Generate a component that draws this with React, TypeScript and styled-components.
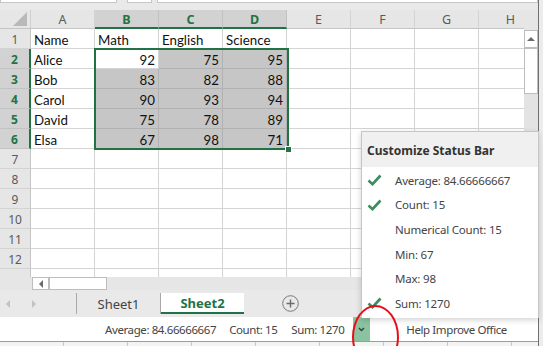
import React from 'react';
import styled, { createGlobalStyle, css } from 'styled-components';

const GREEN = '#217346';
const UI_FONT = `'Noto Sans', 'Open Sans', sans-serif`;
const CELL_FONT = `Lato, 'Noto Sans', sans-serif`;

const GlobalStyle = createGlobalStyle`
    html, body {
        margin: 0;
        padding: 0;
        overflow: hidden;
        background: #e9e9e9;
    }
`;

const Window = styled.div`
    position: relative;
    display: flex;
    width: 543px;
    height: 346px;
    overflow: hidden;
    background: #e9e9e9;
    font-family: ${UI_FONT};
`;

const Main = styled.div`
    display: flex;
    flex-direction: column;
    width: 538px;
    flex-shrink: 0;
`;

const WindowEdge = styled.div`
    flex: 1;
    border-left: 1px solid #6f6f6f;
    background: #ececec;
`;

const FormulaStrip = styled.div`
    display: flex;
    height: 10px;
    flex-shrink: 0;
`;

const FormulaBox = styled.div<{ $w: number; $gap: number }>`
    width: ${p => p.$w}px;
    margin-left: ${p => p.$gap}px;
    height: 2px;
    background: #fff;
    border: 1px solid #c6c6c6;
    border-top: none;
`;

const GridArea = styled.div`
    display: flex;
    height: 267px;
    flex-shrink: 0;
`;

const Sheet = styled.div`
    position: relative;
    width: 524px;
    overflow: hidden;
    display: grid;
    grid-template-columns: 31px repeat(8, 64px);
    grid-template-rows: 19px repeat(13, 20px);
    background: #fff;
`;

const Corner = styled.div`
    position: relative;
    background: #e6e6e6;
    border-right: 1px solid #cfcfcf;
    border-bottom: 1px solid #c4c4c4;
    box-sizing: border-box;

    &::after {
        content: '';
        position: absolute;
        right: 3px;
        bottom: 2px;
        border-style: solid;
        border-width: 0 0 14px 14px;
        border-color: transparent transparent #b9b9b9 transparent;
    }
`;

const ColHead = styled.div<{ $sel?: boolean }>`
    display: flex;
    align-items: center;
    justify-content: center;
    padding-top: 1px;
    box-sizing: border-box;
    font-size: 12.5px;
    color: #5a5a5a;
    background: #e6e6e6;
    border-right: 1px solid #d3d3d3;
    border-bottom: 1px solid #c4c4c4;

    ${p =>
        p.$sel &&
        css`
            background: #d2d2d2;
            color: ${GREEN};
            font-weight: 700;
            border-right-color: #c2c2c2;
            border-bottom: 2px solid ${GREEN};
        `}
`;

const RowHead = styled.div<{ $sel?: boolean }>`
    display: flex;
    align-items: center;
    justify-content: center;
    padding-top: 1px;
    box-sizing: border-box;
    font-size: 12px;
    color: #5a5a5a;
    background: #e6e6e6;
    border-right: 1px solid #c4c4c4;
    border-bottom: 1px solid #d3d3d3;

    ${p =>
        p.$sel &&
        css`
            background: #d2d2d2;
            color: ${GREEN};
            font-weight: 700;
            border-right: 2px solid ${GREEN};
            border-bottom-color: #c2c2c2;
        `}
`;

const Cell = styled.div<{ $fill?: boolean; $num?: boolean }>`
    display: flex;
    align-items: flex-end;
    justify-content: ${p => (p.$num ? 'flex-end' : 'flex-start')};
    box-sizing: border-box;
    padding: 0 3px 0 3px;
    font-family: ${CELL_FONT};
    font-size: 13.3px;
    color: #111;
    white-space: nowrap;
    background: ${p => (p.$fill ? '#c6c6c6' : '#fff')};
    border-right: 1px solid ${p => (p.$fill ? '#b2b2b2' : '#d4d4d4')};
    border-bottom: 1px solid ${p => (p.$fill ? '#b2b2b2' : '#d4d4d4')};
`;

const Selection = styled.div`
    position: absolute;
    left: 94px;
    top: 38px;
    width: 195px;
    height: 102px;
    box-sizing: border-box;
    border: 2px solid ${GREEN};
    pointer-events: none;

    &::after {
        content: '';
        position: absolute;
        right: -5px;
        bottom: -5px;
        width: 5px;
        height: 5px;
        background: ${GREEN};
        border: 1px solid #fff;
    }
`;

const VScroll = styled.div`
    display: flex;
    flex-direction: column;
    width: 14px;
    background: #e3e3e3;
`;

const VScrollHead = styled.div`
    height: 20px;
    background: #e6e6e6;
`;

const ScrollButton = styled.div<{ $h: number }>`
    display: flex;
    align-items: center;
    justify-content: center;
    height: ${p => p.$h}px;
    box-sizing: border-box;
    background: #fff;
    border: 1px solid #bdbdbd;
`;

const UpArrow = styled.div`
    border-style: solid;
    border-width: 0 4px 4px 4px;
    border-color: transparent transparent #6b6b6b transparent;
`;

const LeftArrow = styled.div`
    border-style: solid;
    border-width: 4px 4px 4px 0;
    border-color: transparent #6b6b6b transparent transparent;
`;

const HScroll = styled.div`
    display: flex;
    height: 13px;
    padding-left: 32px;
    flex-shrink: 0;
    background: #e6e6e6;
`;

const HScrollButton = styled.div<{ $w: number }>`
    display: flex;
    align-items: center;
    justify-content: center;
    width: ${p => p.$w}px;
    box-sizing: border-box;
    background: #fff;
    border: 1px solid #bdbdbd;
`;

const TabBar = styled.div`
    display: flex;
    align-items: stretch;
    height: 27px;
    padding: 3px 0;
    box-sizing: border-box;
    flex-shrink: 0;
    background: #e9e9e9;
`;

const TabNav = styled.div`
    display: flex;
    align-items: center;
    gap: 22px;
    width: 76px;
    padding-left: 6px;
    box-sizing: border-box;
`;

const NavArrow = styled.div<{ $dir: 'left' | 'right' }>`
    border-style: solid;
    border-width: ${p => (p.$dir === 'left' ? '4px 4px 4px 0' : '4px 0 4px 4px')};
    border-color: ${p =>
        p.$dir === 'left'
            ? 'transparent #c2c2c2 transparent transparent'
            : 'transparent transparent transparent #c2c2c2'};
`;

const TabSep = styled.div`
    width: 1px;
    background: #a8a8a8;
`;

const Tab = styled.div<{ $active?: boolean }>`
    display: flex;
    align-items: center;
    justify-content: center;
    width: 83px;
    box-sizing: border-box;
    font-size: 13px;
    color: #444;

    ${p =>
        p.$active &&
        css`
            background: #fff;
            color: ${GREEN};
            font-weight: 700;
            border-bottom: 2px solid ${GREEN};
        `}
`;

const AddSheet = styled.div`
    align-self: center;
    margin-left: 38px;
    display: flex;
`;

const StatusBar = styled.div`
    display: flex;
    align-items: center;
    height: 24px;
    padding-left: 105px;
    padding-top: 1px;
    box-sizing: border-box;
    flex-shrink: 0;
    background: #fff;
    font-size: 11.5px;
    letter-spacing: -0.4px;
    color: #444;
    white-space: nowrap;
`;

const StatusItem = styled.span<{ $gap?: number }>`
    margin-left: ${p => p.$gap ?? 0}px;
`;

const StatusButton = styled.div`
    display: flex;
    align-items: center;
    justify-content: center;
    align-self: stretch;
    width: 17px;
    margin-top: -1px;
    margin-left: 9px;
    background: #8bc3a0;
`;

const BottomStrip = styled.div`
    flex: 1;
    border-top: 1px solid #9c9c9c;
    background: repeating-linear-gradient(
        90deg,
        #f3f3f3 0px,
        #f3f3f3 63px,
        #c9c9c9 63px,
        #c9c9c9 64px
    );
`;

const Popup = styled.div`
    position: absolute;
    left: 361px;
    top: 131px;
    width: 178px;
    height: 187px;
    box-sizing: border-box;
    background: #fff;
    border: 1px solid #c6c6c6;
    border-bottom: none;
    box-shadow: 0 2px 6px rgba(0, 0, 0, 0.18);
    z-index: 2;
`;

const PopupHeader = styled.div`
    display: flex;
    align-items: center;
    height: 35px;
    padding: 1px 0 0 5px;
    box-sizing: border-box;
    background: #f0f0f0;
    font-size: 12px;
    font-weight: 700;
    color: #333;
`;

const MenuList = styled.div`
    padding-top: 1px;
`;

const MenuItem = styled.div`
    display: flex;
    align-items: center;
    height: 24.6px;
    font-size: 11.5px;
    letter-spacing: -0.2px;
    color: #444;
    white-space: nowrap;
`;

const CheckSlot = styled.div`
    display: flex;
    align-items: center;
    width: 33px;
    padding-left: 5px;
    box-sizing: border-box;
`;

const RedCircle = styled.div`
    position: absolute;
    left: 352px;
    top: 305px;
    width: 47px;
    height: 64px;
    box-sizing: border-box;
    border: 2.5px solid #e50f19;
    border-radius: 50%;
    z-index: 5;
    pointer-events: none;
`;

const Check = () => (
    <svg width="15" height="12" viewBox="0 0 15 12">
        <path d="M1.5 6.5 L5.5 10.2 L13.5 1.5" fill="none" stroke="#3a8d5d" strokeWidth="2.6" />
    </svg>
);

const PlusCircle = () => (
    <svg width="17" height="17" viewBox="0 0 17 17">
        <circle cx="8.5" cy="8.5" r="7.8" fill="none" stroke="#7a7a7a" strokeWidth="1" />
        <path d="M8.5 4.5 V12.5 M4.5 8.5 H12.5" stroke="#6a6a6a" strokeWidth="1.4" />
    </svg>
);

const Chevron = () => (
    <svg width="7" height="5" viewBox="0 0 7 5">
        <path d="M1 1 L3.5 3.5 L6 1" fill="none" stroke="#2f3f35" strokeWidth="1.3" />
    </svg>
);

const COLUMNS = ['A', 'B', 'C', 'D', 'E', 'F', 'G', 'H'];
const SELECTED_COLS = [1, 2, 3];
const VISIBLE_ROWS = 12;

const DATA: (string | number)[][] = [
    ['Name', 'Math', 'English', 'Science'],
    ['Alice', 92, 75, 95],
    ['Bob', 83, 82, 88],
    ['Carol', 90, 93, 94],
    ['David', 75, 78, 89],
    ['Elsa', 67, 98, 71],
];

const MENU = [
    { label: 'Average: 84.66666667', checked: true },
    { label: 'Count: 15', checked: true },
    { label: 'Numerical Count: 15', checked: false },
    { label: 'Min: 67', checked: false },
    { label: 'Max: 98', checked: false },
    { label: 'Sum: 1270', checked: true },
];

const isFilled = (row: number, col: number) =>
    row >= 1 && row <= 5 && col >= 1 && col <= 3 && !(row === 1 && col === 1);

const App = () => {
    // one extra row peeks out under the last numbered one
    const rows = Array.from({ length: VISIBLE_ROWS + 1 }, (_, i) => i);

    return (
        <>
            <GlobalStyle />
            <Window>
                <Main>
                    <FormulaStrip>
                        <FormulaBox $w={115} $gap={0} />
                        <FormulaBox $w={23} $gap={10} />
                        <FormulaBox $w={380} $gap={5} />
                    </FormulaStrip>

                    <GridArea>
                        <Sheet>
                            <Corner />
                            {COLUMNS.map((c, i) => (
                                <ColHead key={c} $sel={SELECTED_COLS.includes(i)}>
                                    {c}
                                </ColHead>
                            ))}
                            {rows.map(r => (
                                <React.Fragment key={r}>
                                    <RowHead $sel={r >= 1 && r <= 5}>
                                        {r < VISIBLE_ROWS ? r + 1 : null}
                                    </RowHead>
                                    {COLUMNS.map((c, ci) => {
                                        const value = DATA[r]?.[ci];
                                        return (
                                            <Cell
                                                key={c}
                                                $fill={isFilled(r, ci)}
                                                $num={typeof value === 'number'}
                                            >
                                                {value}
                                            </Cell>
                                        );
                                    })}
                                </React.Fragment>
                            ))}
                            <Selection />
                        </Sheet>
                        <VScroll>
                            <VScrollHead />
                            <ScrollButton $h={18}>
                                <UpArrow />
                            </ScrollButton>
                            <ScrollButton $h={46} />
                        </VScroll>
                    </GridArea>

                    <HScroll>
                        <HScrollButton $w={17}>
                            <LeftArrow />
                        </HScrollButton>
                        <HScrollButton $w={58} />
                    </HScroll>

                    <TabBar>
                        <TabNav>
                            <NavArrow $dir="left" />
                            <NavArrow $dir="right" />
                        </TabNav>
                        <TabSep />
                        <Tab>Sheet1</Tab>
                        <TabSep />
                        <Tab $active>Sheet2</Tab>
                        <AddSheet>
                            <PlusCircle />
                        </AddSheet>
                    </TabBar>

                    <StatusBar>
                        <StatusItem>Average: 84.66666667</StatusItem>
                        <StatusItem $gap={13}>Count: 15</StatusItem>
                        <StatusItem $gap={14}>Sum: 1270</StatusItem>
                        <StatusButton>
                            <Chevron />
                        </StatusButton>
                        <StatusItem $gap={36}>Help Improve Office</StatusItem>
                    </StatusBar>

                    <BottomStrip />
                </Main>
                <WindowEdge />

                <Popup>
                    <PopupHeader>Customize Status Bar</PopupHeader>
                    <MenuList>
                        {MENU.map(item => (
                            <MenuItem key={item.label}>
                                <CheckSlot>{item.checked && <Check />}</CheckSlot>
                                {item.label}
                            </MenuItem>
                        ))}
                    </MenuList>
                </Popup>

                <RedCircle />
            </Window>
        </>
    );
};

export default App;
